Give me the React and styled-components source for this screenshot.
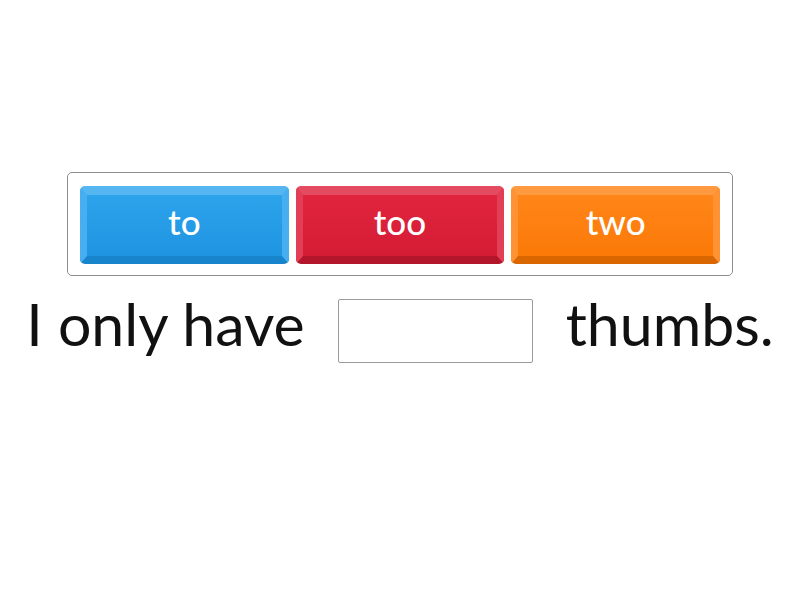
import React from "react";
import styled, { createGlobalStyle } from "styled-components";

const Global = createGlobalStyle`
  html, body { margin: 0; padding: 0; background: #ffffff; }
  body { font-family: "Lato", "Noto Sans", sans-serif; }
`;

const Page = styled.div`
  width: 800px;
  height: 600px;
  box-sizing: border-box;
  padding-top: 172px;
  display: flex;
  flex-direction: column;
  align-items: center;
`;

const Tray = styled.div`
  width: 666px;
  box-sizing: border-box;
  border: 1px solid #8e8e8e;
  border-radius: 5px;
  padding: 13px 12px 11px 12px;
  display: flex;
  gap: 7px;
`;

const palettes = {
  blue: { top: "#55b6f1", side: "#47aff0", face1: "#2da3ec", face2: "#1f95e2", bottom: "#1884cc" },
  red: { top: "#e44b60", side: "#e23e55", face1: "#e0243e", face2: "#d51c35", bottom: "#b3162b" },
  orange: { top: "#ff9a40", side: "#ff9232", face1: "#ff8518", face2: "#fb7a08", bottom: "#da6600" },
};

const Tile = styled.div`
  flex: 1;
  height: 78px;
  box-sizing: border-box;
  border-radius: 5px;
  border-style: solid;
  border-width: 9px 7px 8px 7px;
  border-color: ${(p) => palettes[p.$tone].top} ${(p) => palettes[p.$tone].side}
    ${(p) => palettes[p.$tone].bottom} ${(p) => palettes[p.$tone].side};
  background: linear-gradient(
    ${(p) => palettes[p.$tone].face1},
    ${(p) => palettes[p.$tone].face2}
  );
  display: flex;
  align-items: center;
  justify-content: center;
  color: #ffffff;
  font-size: 35px;
  font-weight: 500;
  padding-bottom: 9px;
`;

const Sentence = styled.div`
  margin-top: 18px;
  display: flex;
  align-items: center;
  gap: 33px;
  font-size: 59px;
  color: #111111;
  line-height: 1;
`;

const Words = styled.span`
  white-space: nowrap;
  padding-bottom: 15px;
`;

const Blank = styled.div`
  width: 195px;
  height: 64px;
  box-sizing: border-box;
  border: 1px solid #9a9a9a;
  border-radius: 2px;
  background: #ffffff;
`;

export default function App() {
  return (
    <>
      <Global />
      <Page>
        <Tray>
          <Tile $tone="blue">to</Tile>
          <Tile $tone="red">too</Tile>
          <Tile $tone="orange">two</Tile>
        </Tray>
        <Sentence>
          <Words>I only have</Words>
          <Blank />
          <Words>thumbs.</Words>
        </Sentence>
      </Page>
    </>
  );
}
